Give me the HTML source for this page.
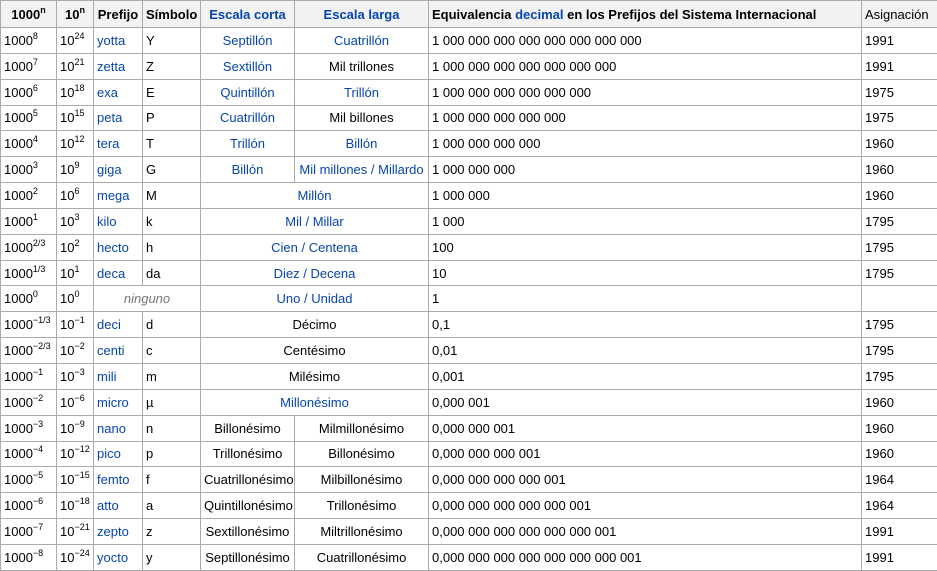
<!DOCTYPE html>
<html><head><meta charset="utf-8"><style>
html,body{margin:0;padding:0;background:#fff;}
body{width:937px;height:570px;overflow:hidden;font-family:"Liberation Sans",Arial,sans-serif;font-size:13px;color:#000;}
table{border-collapse:collapse;table-layout:fixed;width:937px;}
td,th{border:1px solid #aaa;padding:0 3px;white-space:nowrap;overflow:hidden;line-height:15px;text-align:left;}
tr{height:25.857px;}
tr.h{height:27px;}
th{background:#f2f2f2;font-weight:bold;text-align:center;}
.a{color:#0645ad;}
.c{text-align:center;}
sup{font-size:9px;line-height:0;vertical-align:6px;}
.n{color:#777;font-style:italic;text-align:center;}
</style></head><body>
<table>
<colgroup><col style="width:56px"><col style="width:37px"><col style="width:49px"><col style="width:58px"><col style="width:94px"><col style="width:134px"><col style="width:433px"><col style="width:76px"></colgroup>
<tr class="h"><th>1000<sup>n</sup></th><th>10<sup>n</sup></th><th>Prefijo</th><th>Símbolo</th><th class="a">Escala corta</th><th class="a">Escala larga</th><th style="text-align:left">Equivalencia <span class="a">decimal</span> en los Prefijos del Sistema Internacional</th><th style="font-weight:normal;text-align:left">Asignación</th></tr>
<tr><td>1000<sup>8</sup></td><td>10<sup>24</sup></td><td class="a">yotta</td><td>Y</td><td class="a c">Septillón</td><td class="a c">Cuatrillón</td><td>1 000 000 000 000 000 000 000 000</td><td>1991</td></tr>
<tr><td>1000<sup>7</sup></td><td>10<sup>21</sup></td><td class="a">zetta</td><td>Z</td><td class="a c">Sextillón</td><td class="c">Mil trillones</td><td>1 000 000 000 000 000 000 000</td><td>1991</td></tr>
<tr><td>1000<sup>6</sup></td><td>10<sup>18</sup></td><td class="a">exa</td><td>E</td><td class="a c">Quintillón</td><td class="a c">Trillón</td><td>1 000 000 000 000 000 000</td><td>1975</td></tr>
<tr><td>1000<sup>5</sup></td><td>10<sup>15</sup></td><td class="a">peta</td><td>P</td><td class="a c">Cuatrillón</td><td class="c">Mil billones</td><td>1 000 000 000 000 000</td><td>1975</td></tr>
<tr><td>1000<sup>4</sup></td><td>10<sup>12</sup></td><td class="a">tera</td><td>T</td><td class="a c">Trillón</td><td class="a c">Billón</td><td>1 000 000 000 000</td><td>1960</td></tr>
<tr><td>1000<sup>3</sup></td><td>10<sup>9</sup></td><td class="a">giga</td><td>G</td><td class="a c">Billón</td><td class="a c">Mil millones / Millardo</td><td>1 000 000 000</td><td>1960</td></tr>
<tr><td>1000<sup>2</sup></td><td>10<sup>6</sup></td><td class="a">mega</td><td>M</td><td colspan="2" class="a c">Millón</td><td>1 000 000</td><td>1960</td></tr>
<tr><td>1000<sup>1</sup></td><td>10<sup>3</sup></td><td class="a">kilo</td><td>k</td><td colspan="2" class="a c">Mil / Millar</td><td>1 000</td><td>1795</td></tr>
<tr><td>1000<sup>2/3</sup></td><td>10<sup>2</sup></td><td class="a">hecto</td><td>h</td><td colspan="2" class="a c">Cien / Centena</td><td>100</td><td>1795</td></tr>
<tr><td>1000<sup>1/3</sup></td><td>10<sup>1</sup></td><td class="a">deca</td><td>da</td><td colspan="2" class="a c">Diez / Decena</td><td>10</td><td>1795</td></tr>
<tr><td>1000<sup>0</sup></td><td>10<sup>0</sup></td><td colspan="2" class="n">ninguno</td><td colspan="2" class="a c">Uno / Unidad</td><td>1</td><td></td></tr>
<tr><td>1000<sup>−1/3</sup></td><td>10<sup>−1</sup></td><td class="a">deci</td><td>d</td><td colspan="2" class="c">Décimo</td><td>0,1</td><td>1795</td></tr>
<tr><td>1000<sup>−2/3</sup></td><td>10<sup>−2</sup></td><td class="a">centi</td><td>c</td><td colspan="2" class="c">Centésimo</td><td>0,01</td><td>1795</td></tr>
<tr><td>1000<sup>−1</sup></td><td>10<sup>−3</sup></td><td class="a">mili</td><td>m</td><td colspan="2" class="c">Milésimo</td><td>0,001</td><td>1795</td></tr>
<tr><td>1000<sup>−2</sup></td><td>10<sup>−6</sup></td><td class="a">micro</td><td>µ</td><td colspan="2" class="a c">Millonésimo</td><td>0,000 001</td><td>1960</td></tr>
<tr><td>1000<sup>−3</sup></td><td>10<sup>−9</sup></td><td class="a">nano</td><td>n</td><td class="c">Billonésimo</td><td class="c">Milmillonésimo</td><td>0,000 000 001</td><td>1960</td></tr>
<tr><td>1000<sup>−4</sup></td><td>10<sup>−12</sup></td><td class="a">pico</td><td>p</td><td class="c">Trillonésimo</td><td class="c">Billonésimo</td><td>0,000 000 000 001</td><td>1960</td></tr>
<tr><td>1000<sup>−5</sup></td><td>10<sup>−15</sup></td><td class="a">femto</td><td>f</td><td class="c">Cuatrillonésimo</td><td class="c">Milbillonésimo</td><td>0,000 000 000 000 001</td><td>1964</td></tr>
<tr><td>1000<sup>−6</sup></td><td>10<sup>−18</sup></td><td class="a">atto</td><td>a</td><td class="c">Quintillonésimo</td><td class="c">Trillonésimo</td><td>0,000 000 000 000 000 001</td><td>1964</td></tr>
<tr><td>1000<sup>−7</sup></td><td>10<sup>−21</sup></td><td class="a">zepto</td><td>z</td><td class="c">Sextillonésimo</td><td class="c">Miltrillonésimo</td><td>0,000 000 000 000 000 000 001</td><td>1991</td></tr>
<tr><td>1000<sup>−8</sup></td><td>10<sup>−24</sup></td><td class="a">yocto</td><td>y</td><td class="c">Septillonésimo</td><td class="c">Cuatrillonésimo</td><td>0,000 000 000 000 000 000 000 001</td><td>1991</td></tr>
</table>
</body></html>
